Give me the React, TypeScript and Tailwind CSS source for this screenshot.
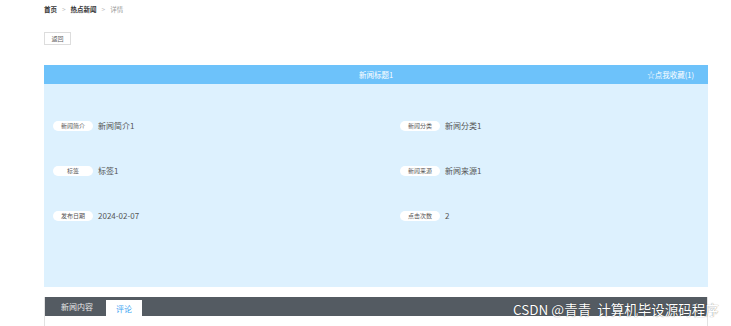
import React from 'react';

const font = { fontFamily: '"Noto Sans CJK SC", "Noto Sans", sans-serif' };

const rows: [string, string, string, string][] = [
  ['新闻简介', '新闻简介1', '新闻分类', '新闻分类1'],
  ['标签', '标签1', '新闻来源', '新闻来源1'],
  ['发布日期', '2024-02-07', '点击次数', '2'],
];

const Field: React.FC<{ label: string; value: string }> = ({ label, value }) => (
  <div className="flex items-center">
    <span className="flex h-[10px] w-[40px] items-center justify-center rounded-full bg-white text-[6px] leading-none text-[#555]">
      {label}
    </span>
    <span className="ml-[5px] text-[8px] leading-none text-[#555]">{value}</span>
  </div>
);

export default function App() {
  return (
    <div className="relative h-[326px] w-[731px] overflow-hidden bg-white" style={font}>
      <div className="ml-[44px] w-[664px]">
        {/* Breadcrumb */}
        <div className="flex h-[18px] items-center gap-[5px] text-[6.5px] leading-none">
          <span className="font-bold text-[#333]">首页</span>
          <span className="text-[#bbb]">&gt;</span>
          <span className="font-bold text-[#333]">热点新闻</span>
          <span className="text-[#bbb]">&gt;</span>
          <span className="text-[#999]">详情</span>
        </div>

        {/* Back button */}
        <div className="mt-[14px] flex h-[13px] w-[27px] items-center justify-center border border-[#ddd] text-[6px] leading-none text-[#666]">
          返回
        </div>

        {/* Detail panel */}
        <div className="mt-[20px]">
          <div className="relative flex h-[19px] items-center justify-center bg-[#6dc2fa] text-[7.5px] leading-none text-white">
            新闻标题1
            <span className="absolute right-[14px] top-1/2 -translate-y-1/2">☆点我收藏(1)</span>
          </div>
          <div className="h-[203px] bg-[#ddf1fe] pt-[37px]">
            {rows.map(([l1, v1, l2, v2]) => (
              <div key={l1} className="grid h-[45px] grid-cols-[347px_1fr] items-start pl-[9px]">
                <Field label={l1} value={v1} />
                <Field label={l2} value={v2} />
              </div>
            ))}
          </div>
        </div>

        {/* Tabs */}
        <div className="mt-[10px] border-x border-[#e2e2e2]">
          <div className="flex h-[19px] items-end bg-[#545b62] pl-[16px]">
            <span className="mb-[5px] text-[8px] leading-none text-[#e8e8e8]">新闻内容</span>
            <span className="ml-[13px] flex h-[18px] w-[36px] translate-y-[2px] items-center justify-center bg-white text-[8px] leading-none text-[#3ea4f2]">
              评论
            </span>
          </div>
          <div className="h-[20px] bg-white" />
        </div>
      </div>

      {/* Watermark */}
      <div
        className="absolute left-[513px] top-[303px] whitespace-nowrap text-[13.5px] leading-none text-white"
        style={{ textShadow: '0 0 1px rgba(0,0,0,0.6)' }}
      >
        CSDN @青青&nbsp;&nbsp;计算机毕设源码程序
      </div>
    </div>
  );
}
